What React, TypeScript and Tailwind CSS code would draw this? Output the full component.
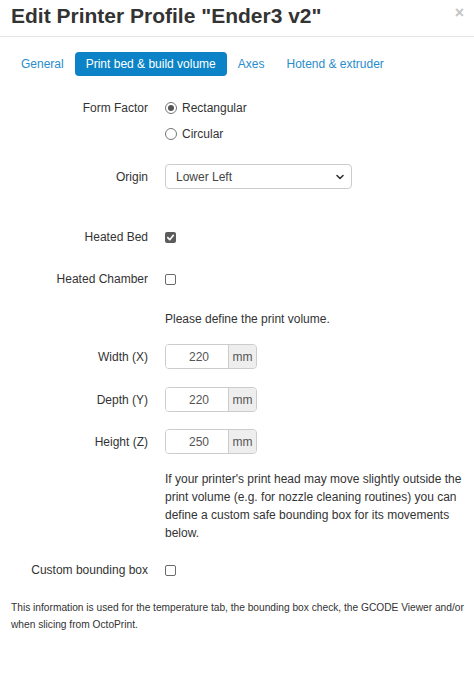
import React from "react";

function Row({ label, children, className = "" }: { label?: string; children?: React.ReactNode; className?: string }) {
  return (
    <div className={`flex items-center ${className}`}>
      <div className="w-[148px] shrink-0 text-right">{label}</div>
      <div className="ml-[17px] flex items-center">{children}</div>
    </div>
  );
}

function Radio({ checked }: { checked?: boolean }) {
  return (
    <span className="w-[12px] h-[12px] rounded-full border border-[#767676] bg-white flex items-center justify-center">
      {checked && <span className="w-[6px] h-[6px] rounded-full bg-[#555]" />}
    </span>
  );
}

function Checkbox({ checked }: { checked?: boolean }) {
  if (checked) {
    return (
      <span className="w-[11px] h-[11px] rounded-[2px] bg-[#5c5c5c] flex items-center justify-center">
        <svg width="9" height="9" viewBox="0 0 10 10">
          <path d="M2 5.2 L4.2 7.4 L8.2 2.6" stroke="white" strokeWidth="1.8" fill="none" strokeLinecap="round" strokeLinejoin="round" />
        </svg>
      </span>
    );
  }
  return <span className="w-[11px] h-[11px] rounded-[2px] border border-[#6b6b6b] bg-white" />;
}

function MmInput({ value }: { value: string }) {
  return (
    <div className="flex h-[25px] w-[92px] border border-[#ccc] rounded-[4px] overflow-hidden">
      <div className="w-[62px] bg-white text-right pr-[19px] flex items-center justify-end text-[#555]">{value}</div>
      <div className="flex-1 bg-[#eee] border-l border-[#ccc] flex items-center justify-center text-[#555]">mm</div>
    </div>
  );
}

export default function App() {
  return (
    <div className="w-[474px] h-[693px] bg-white font-['Liberation_Sans',Arial,sans-serif] text-[12px] text-[#333] overflow-hidden">
      <div className="h-[37px] border-b border-[#e5e5e5] flex justify-between pl-[11px] pr-[10px] pt-[5px]">
        <h3 className="text-[21px] leading-[21px] font-bold text-[#333]">Edit Printer Profile "Ender3 v2"</h3>
        <span className="text-[16px] leading-[16px] font-bold text-[#c4c4c4]">×</span>
      </div>

      <div className="flex mt-[15px] pl-[10px]">
        <div className="h-[24px] px-[11px] flex items-center rounded-[4px] text-[#2a8ccc]">General</div>
        <div className="h-[24px] px-[11px] flex items-center rounded-[4px] bg-[#0b83c6] text-white">Print bed &amp; build volume</div>
        <div className="h-[24px] px-[11px] flex items-center rounded-[4px] text-[#2a8ccc]">Axes</div>
        <div className="h-[24px] px-[11px] flex items-center rounded-[4px] text-[#2a8ccc]">Hotend &amp; extruder</div>
      </div>

      <div className="flex flex-col">
        <Row label="Form Factor" className="mt-[22px] h-[20px]">
          <Radio checked />
          <span className="ml-[5px]">Rectangular</span>
        </Row>
        <Row className="mt-[6px] h-[20px]">
          <Radio />
          <span className="ml-[5px]">Circular</span>
        </Row>
        <Row label="Origin" className="mt-[20px] h-[25px]">
          <div className="w-[187px] h-[25px] border border-[#ccc] rounded-[4px] flex items-center justify-between pl-[10px] pr-[6px] text-[#444]">
            <span>Lower Left</span>
            <svg width="10" height="10" viewBox="0 0 10 10">
              <path d="M2 3.5 L5 6.5 L8 3.5" stroke="#333" strokeWidth="1.6" fill="none" strokeLinecap="round" strokeLinejoin="round" />
            </svg>
          </div>
        </Row>
        <Row label="Heated Bed" className="mt-[38px] h-[20px]">
          <Checkbox checked />
        </Row>
        <Row label="Heated Chamber" className="mt-[22px] h-[20px]">
          <Checkbox />
        </Row>
        <Row className="mt-[20px] h-[20px]">
          <span>Please define the print volume.</span>
        </Row>
        <Row label="Width (X)" className="mt-[15px] h-[25px]">
          <MmInput value="220" />
        </Row>
        <Row label="Depth (Y)" className="mt-[18px] h-[25px]">
          <MmInput value="220" />
        </Row>
        <Row label="Height (Z)" className="mt-[17px] h-[25px]">
          <MmInput value="250" />
        </Row>
        <div className="mt-[16px] ml-[165px] w-[304px] leading-[18px]">
          If your printer's print head may move slightly outside the print volume (e.g. for nozzle cleaning routines) you can define a custom safe bounding box for its movements below.
        </div>
        <Row label="Custom bounding box" className="mt-[18px] h-[20px]">
          <Checkbox />
        </Row>
        <div className="mt-[19px] pl-[11px] pr-[8px] text-[10.2px] leading-[17px]">
          This information is used for the temperature tab, the bounding box check, the GCODE Viewer and/or when slicing from OctoPrint.
        </div>
      </div>
    </div>
  );
}
